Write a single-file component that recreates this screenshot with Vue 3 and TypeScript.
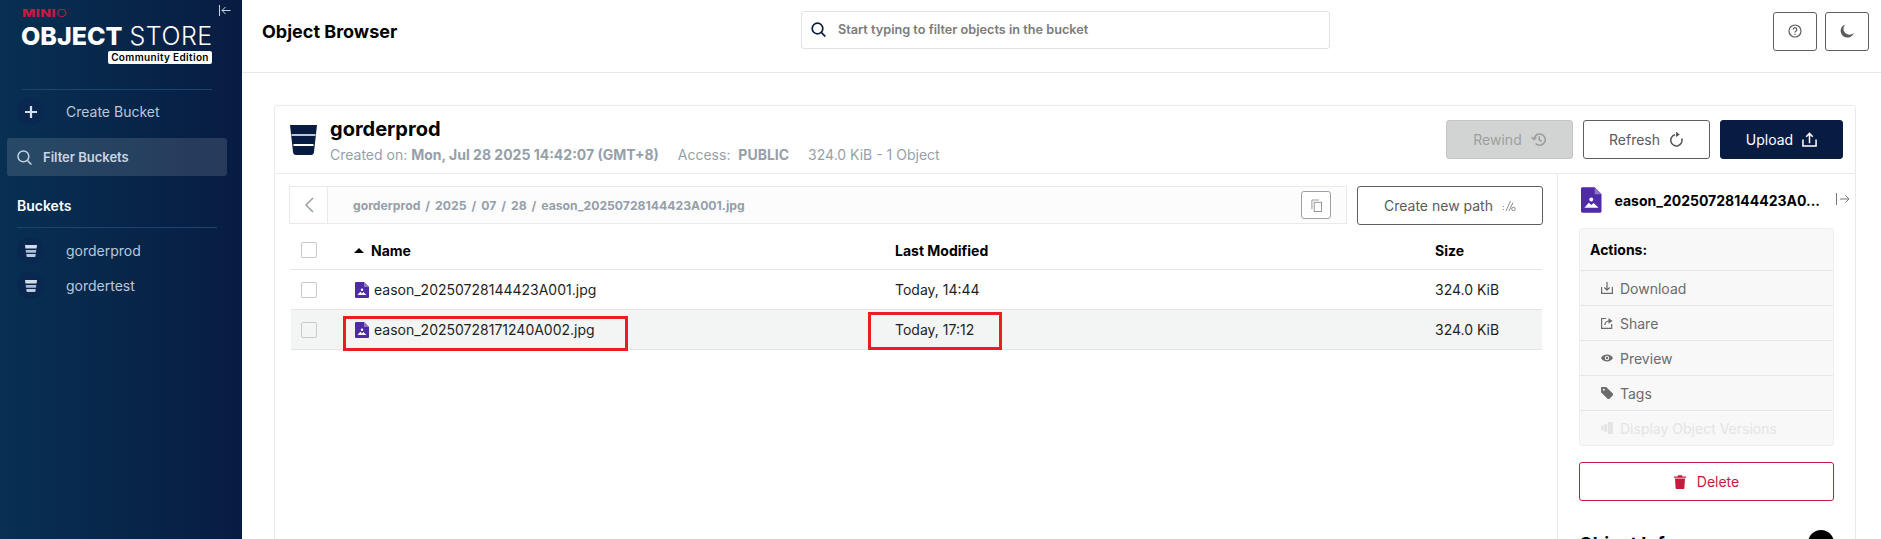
<template>
  <div class="page">
    <aside class="sidebar">
      <div class="brand">
        <div class="brand-top">
          <div class="minio"><b>MINI</b><span>O</span></div>
          <svg class="collapse" viewBox="0 0 12 12" width="12" height="12" fill="none" stroke="#c9d3df" stroke-width="1">
            <path d="M.5 0v11M11.5 5.5H3M6.5 2 3 5.5 6.5 9" />
          </svg>
        </div>
        <div class="wordmark"><b>OBJECT</b> <span>STORE</span></div>
        <div class="edition">Community Edition</div>
      </div>
      <div class="side-line"></div>
      <div class="side-item create">
        <span class="disc">
          <svg viewBox="0 0 12 12" width="12" height="12"><path d="M6 0v12M0 6h12" stroke="#d6dfe9" stroke-width="2.2" /></svg>
        </span>
        <span>Create Bucket</span>
      </div>
      <div class="side-filter">
        <svg viewBox="0 0 15 15" width="15" height="15" fill="none" stroke="#c5d2e0" stroke-width="1.5">
          <circle cx="6.4" cy="6.4" r="5.4" /><path d="m10.4 10.4 4 4.2" />
        </svg>
        <span>Filter Buckets</span>
      </div>
      <div class="side-title">Buckets</div>
      <div v-for="b in buckets" :key="b" class="side-item bucket">
        <span class="disc">
          <svg viewBox="0 0 12 12" width="12" height="12" fill="#a9bdd6">
            <path d="M0 0h12l-.4 3.600H.4z" fill="#d3dde9" />
            <path d="M.7 4.900h10.600l-.4 2.900H1.100z" />
            <path d="M1.300 9h9.400l-.2 2a1 1 0 0 1-1 1h-7a1 1 0 0 1-1-1z" fill="#bccbdf" />
          </svg>
        </span>
        <span>{{ b }}</span>
      </div>
    </aside>

    <main class="main">
      <header class="topbar">
        <h1>Object Browser</h1>
        <div class="search">
          <svg viewBox="0 0 15 15" width="15" height="15" fill="none" stroke="#081c42" stroke-width="1.7">
            <circle cx="6.500" cy="6.500" r="5.300" /><path d="m10.300 10.300 4 4.200" />
          </svg>
          <span>Start typing to filter objects in the bucket</span>
        </div>
        <div class="top-actions">
          <button class="square">
            <svg viewBox="0 0 14 14" width="14" height="14" fill="none" stroke="#5b5b5b" stroke-width="1.200">
              <circle cx="7" cy="7" r="6" />
              <path d="M5.200 5.500a1.800 1.800 0 1 1 2.800 1.500c-.7.400-1 .8-1 1.500" />
              <path d="M7 9.700v1.200" />
            </svg>
          </button>
          <button class="square">
            <svg viewBox="0 0 14 14" width="14" height="14" fill="#5b5b5b">
              <path d="M5.200.4A6.800 6.800 0 1 0 13.900 9 5.800 5.800 0 0 1 5.200.4z" />
            </svg>
          </button>
        </div>
      </header>

      <div class="content">
        <section class="bucket-head">
          <svg class="bucket-icon" viewBox="0 0 29 30" width="29" height="30">
            <path d="M1 0h27l-3 27q-.3 3-3 3H7q-2.700 0-3-3z" fill="#081c42" />
            <path d="M2.500 10h24" stroke="#fff" stroke-width="1.500" />
            <path d="M4.500 20h20" stroke="#fff" stroke-width="2" />
          </svg>
          <div class="bucket-meta">
            <h2>gorderprod</h2>
            <div class="bucket-sub">
              <span>Created on: <b>Mon, Jul 28 2025 14:42:07 (GMT+8)</b></span>
              <span>Access: &nbsp;<b>PUBLIC</b></span>
              <span>324.0 KiB - 1 Object</span>
            </div>
          </div>
          <div class="head-actions">
            <button class="btn disabled">
              Rewind
              <svg viewBox="0 0 16 16" width="15" height="15" fill="none" stroke="#9e9e9e" stroke-width="1.700">
                <path d="M3.200 7.800a6 6 0 1 1 1.700 4.500" />
                <path d="M.8 5.600 3.200 8l2.400-2.400" />
                <path d="M8.800 4.500v4l2.500 1.500" />
              </svg>
            </button>
            <button class="btn">
              Refresh
              <svg viewBox="0 0 16 16" width="15" height="15" fill="none" stroke="#555" stroke-width="1.600">
                <path d="M6.500 3A6 6 0 1 0 13.600 7" />
                <path d="M6.500 0v5.800L10.500 3z" fill="#555" stroke="none" transform="translate(1 -.4)" />
              </svg>
            </button>
            <button class="btn primary">
              Upload
              <svg viewBox="0 0 16 16" width="15" height="15" fill="none" stroke="#fff" stroke-width="1.600">
                <path d="M1 8v7h14V8" />
                <path d="M8 12V1.500M4.500 5 8 1.500 11.500 5" />
              </svg>
            </button>
          </div>
        </section>

        <section class="lower">
          <div class="browser">
            <div class="path-row">
              <div class="crumbs">
                <div class="back">
                  <svg viewBox="0 0 10 16" width="10" height="16" fill="none" stroke="#8f9aa5" stroke-width="1.400">
                    <path d="M9 1 2 8l7 7" />
                  </svg>
                </div>
                <div class="crumb-text">
                  <span v-for="(c, i) in crumbs" :key="i">{{ c }}</span>
                </div>
                <button class="copy">
                  <svg viewBox="0 0 12 14" width="11" height="13" fill="none" stroke="#8a8f94" stroke-width="1">
                    <rect x="3.500" y="3.500" width="8" height="10" />
                    <path d="M1 11V1h7.500" />
                  </svg>
                </button>
              </div>
              <button class="btn new-path">
                Create new path
                <svg viewBox="0 0 14 12" width="14" height="12" fill="none" stroke="#8d8d8d" stroke-width="1">
                  <path d="M4 11 8.500 1M7 11 11 2.500" />
                  <path d="M1 6.500h1M1 9.500h1" stroke-width="1.200" />
                  <circle cx="11.500" cy="9" r="1.800" />
                </svg>
              </button>
            </div>

            <div class="table">
              <div class="row head">
                <span class="check"></span>
                <span class="name-head"><i class="sort"></i>Name</span>
                <span>Last Modified</span>
                <span>Size</span>
              </div>
              <div v-for="f in files" :key="f.name" class="row" :class="{ active: f.active }">
                <span class="check"></span>
                <span class="file">
                  <svg viewBox="0 0 14 16" width="14" height="16">
                    <path d="M1 0h8l5 5v10a1 1 0 0 1-1 1H1a1 1 0 0 1-1-1V1a1 1 0 0 1 1-1z" fill="#4f2ba7" />
                    <path d="M9 0l5 5H9z" fill="#8e78c6" />
                    <circle cx="7" cy="7.800" r="1.200" fill="#fff" />
                    <path d="M2.500 13 5.300 9.800 7 11.300l1.400-1.300 3 3z" fill="#fff" />
                  </svg>
                  {{ f.name }}
                </span>
                <span>{{ f.modified }}</span>
                <span>{{ f.size }}</span>
              </div>
            </div>
          </div>

          <aside class="detail">
            <div class="detail-title">
              <svg viewBox="0 0 21 26" width="21" height="26">
                <path d="M1.500 0H14l7 7v17.500a1.500 1.500 0 0 1-1.500 1.500h-18A1.500 1.500 0 0 1 0 24.500v-23A1.500 1.500 0 0 1 1.500 0z" fill="#4f2ba7" />
                <path d="M14 0l7 7h-7z" fill="#8e78c6" />
                <circle cx="10.500" cy="12.500" r="2" fill="#fff" />
                <path d="M3.500 21 8 15.800l2.600 2.400 2.300-2.200L18 21z" fill="#fff" />
              </svg>
              <b>eason_20250728144423A0...</b>
              <svg class="close-detail" viewBox="0 0 14 12" width="14" height="12" fill="none" stroke="#777" stroke-width="1">
                <path d="M.5 0v12M4 6h9M9.500 2.500 13 6 9.500 9.500" />
              </svg>
            </div>

            <div class="actions">
              <div class="actions-title">Actions:</div>
              <div class="action">
                <svg viewBox="0 0 12 12" width="12" height="12" fill="none" stroke="#6b6b6b" stroke-width="1.200">
                  <path d="M.6 5v6.400h10.800V5M6 0v8M3.300 5.500 6 8.200l2.700-2.700" />
                </svg>
                Download
              </div>
              <div class="action">
                <svg viewBox="0 0 12 12" width="12" height="12" fill="none" stroke="#6b6b6b" stroke-width="1.200">
                  <path d="M5 1.500H.6v9.900h10.100V7" />
                  <path d="M3.800 8c.3-2.600 2-4 4.700-4" />
                  <path d="M7.500 1 11.500 4 7.500 6.800z" fill="#6b6b6b" stroke="none" />
                </svg>
                Share
              </div>
              <div class="action">
                <svg viewBox="0 0 12 12" width="12" height="12">
                  <path d="M6 2.500C3.400 2.500 1.200 4 0 6c1.200 2 3.400 3.500 6 3.500S10.800 8 12 6c-1.200-2-3.400-3.500-6-3.500z" fill="#6b6b6b" />
                  <circle cx="6" cy="6" r="2.200" fill="#f8f8f8" />
                  <circle cx="6" cy="6" r="1.200" fill="#6b6b6b" />
                </svg>
                Preview
              </div>
              <div class="action">
                <svg viewBox="0 0 12 12" width="12" height="12">
                  <path d="M0 1a1 1 0 0 1 1-1h4.200L12 6.800a1 1 0 0 1 0 1.400L8.200 12a1 1 0 0 1-1.400 0L0 5.200z" fill="#6b6b6b" />
                  <circle cx="2.800" cy="2.800" r="1" fill="#f8f8f8" />
                </svg>
                Tags
              </div>
              <div class="action off">
                <svg viewBox="0 0 12 12" width="12" height="12" fill="#e4e4e4">
                  <rect x="0" y="3.500" width="2.500" height="5" />
                  <rect x="3.200" y="2" width="2.800" height="8" />
                  <rect x="6.800" y="0" width="5.200" height="12" />
                </svg>
                Display Object Versions
              </div>
            </div>

            <button class="delete">
              <svg viewBox="0 0 12 14" width="12" height="14" fill="#c51b3f">
                <path d="M1 3.500h10l-.6 9.500a1 1 0 0 1-1 1H2.600a1 1 0 0 1-1-1z" />
                <path d="M0 1.500h3.800V.3h4.400v1.200H12v1.200H0z" />
              </svg>
              Delete
            </button>

            <div class="info-head">
              <span>Object Info</span>
              <span class="info-toggle">
                <svg viewBox="0 0 12 8" width="12" height="8"><path d="M6 0l6 8H0z" fill="#fff" /></svg>
              </span>
            </div>
          </aside>
        </section>
      </div>
    </main>

    <div class="mark mark-name"></div>
    <div class="mark mark-date"></div>
  </div>
</template>

<script setup lang="ts">
interface FileRow {
  name: string
  modified: string
  size: string
  active?: boolean
}

const buckets: string[] = ['gorderprod', 'gordertest']
const crumbs: string[] = ['gorderprod', '2025', '07', '28', 'eason_20250728144423A001.jpg']
const files: FileRow[] = [
  { name: 'eason_20250728144423A001.jpg', modified: 'Today, 14:44', size: '324.0 KiB' },
  { name: 'eason_20250728171240A002.jpg', modified: 'Today, 17:12', size: '324.0 KiB', active: true },
]
</script>

<style>
html, body {
  margin: 0;
  background: #fff;
  overflow: hidden;
}
</style>

<style scoped>
.page {
  position: relative;
  display: flex;
  height: 539px;
  overflow: hidden;
  font-family: Inter, "Liberation Sans", sans-serif;
  font-size: 14px;
  color: #000;
}

button {
  font-family: inherit;
}

.sidebar {
  flex: 0 0 242px;
  box-sizing: border-box;
  padding: 0 0 0 7px;
  background: linear-gradient(90deg, #073052 0%, #081c42 100%);
  color: #b9c8da;
}

.brand {
  width: 190px;
  margin-left: 15px;
  height: 89px;
  box-sizing: border-box;
  padding-top: 8px;
}

.brand-top {
  display: flex;
  justify-content: space-between;
  align-items: flex-start;
  height: 13px;
}

.minio {
  font-size: 10px;
  line-height: 11px;
  letter-spacing: .3px;
  color: #c51b3f;
  transform: scaleX(1.42);
  transform-origin: left center;
}

.minio b {
  font-weight: 800;
}

.minio span {
  font-weight: 300;
}

.collapse {
  margin: -3px -19px 0 0;
  flex-shrink: 0;
}

.wordmark {
  margin: 2px 0 0 -1px;
  white-space: nowrap;
  font-size: 25px;
  line-height: 26px;
  color: #fff;
}

.wordmark b {
  font-weight: 800;
}

.wordmark span {
  font-weight: 300;
  letter-spacing: .5px;
}

.edition {
  width: 104px;
  height: 13px;
  margin: 2px 0 0 86px;
  background: #fff;
  border-radius: 2px;
  color: #000;
  font-size: 10px;
  font-weight: 600;
  line-height: 13px;
  letter-spacing: .35px;
  text-align: center;
  white-space: nowrap;
}

.side-line {
  width: 190px;
  height: 1px;
  margin-left: 15px;
  background: #1b4568;
}

.side-item {
  display: flex;
  align-items: center;
  gap: 22px;
  margin-left: 10px;
}

.create {
  margin-top: 8px;
  height: 27px;
}

.bucket {
  height: 27px;
  margin-bottom: 8px;
}

.disc {
  display: flex;
  align-items: center;
  justify-content: center;
  width: 27px;
  height: 27px;
  flex-shrink: 0;
  border-radius: 50%;
  background: #0a2750;
}

.side-filter {
  display: flex;
  align-items: center;
  gap: 11px;
  box-sizing: border-box;
  width: 220px;
  height: 38px;
  margin-top: 13px;
  padding-left: 10px;
  border-radius: 3px;
  background: rgba(255, 255, 255, .13);
  color: #c9d5e3;
  font-size: 13px;
  font-weight: 600;
}

.side-title {
  width: 200px;
  height: 52px;
  box-sizing: border-box;
  margin: 0 0 9px 10px;
  padding-top: 21px;
  border-bottom: 1px solid #1b4568;
  color: #fff;
  font-weight: 600;
  line-height: 18px;
}

.main {
  flex: 1;
  min-width: 0;
}

.topbar {
  display: flex;
  align-items: center;
  box-sizing: border-box;
  height: 73px;
  padding: 0 12px 10px 20px;
  border-bottom: 1px solid #e8e8e8;
}

h1 {
  flex: 0 0 539px;
  margin: 0;
  font-size: 18px;
  font-weight: 700;
}

.search {
  display: flex;
  align-items: center;
  gap: 12px;
  box-sizing: border-box;
  width: 529px;
  height: 38px;
  margin-bottom: 2px;
  padding: 0 0 1px 9px;
  border: 1px solid #e2e2e2;
  border-radius: 3px;
  color: #7b7b7b;
  font-size: 12.7px;
  font-weight: 600;
}

.top-actions {
  display: flex;
  gap: 8px;
  margin-left: auto;
}

.square {
  display: flex;
  align-items: center;
  justify-content: center;
  width: 44px;
  height: 39px;
  padding: 0;
  background: #fff;
  border: 1px solid #5e5e5e;
  border-radius: 3px;
}

.content {
  padding: 32px 25px 0 32px;
}

.bucket-head {
  display: flex;
  align-items: center;
  box-sizing: border-box;
  height: 69px;
  padding: 0 12px 0 14px;
  border: 1px solid #eaeaea;
  border-radius: 3px 3px 0 0;
}

.bucket-icon {
  flex-shrink: 0;
  margin-right: 12px;
}

h2 {
  margin: 0;
  font-size: 20px;
  font-weight: 700;
  line-height: 24px;
}

.bucket-sub {
  display: flex;
  gap: 19px;
  margin-top: 5px;
  color: #969fa9;
  font-size: 14px;
  line-height: 17px;
  white-space: nowrap;
}

.head-actions {
  display: flex;
  gap: 10px;
  margin-left: auto;
}

.btn {
  display: flex;
  align-items: center;
  justify-content: center;
  gap: 9px;
  width: 127px;
  height: 39px;
  padding: 0;
  background: #fff;
  border: 1px solid #5e5e5e;
  border-radius: 3px;
  color: #5b5b5b;
  font-size: 14px;
}

.btn.disabled {
  background: #d2d4d4;
  border-color: #c4c6c6;
  color: #9e9e9e;
}

.btn.primary {
  width: 123px;
  background: #081c42;
  border-color: #081c42;
  color: #fff;
}

.lower {
  display: flex;
  height: 366px;
  border: 1px solid #eaeaea;
  border-top: 0;
  box-sizing: border-box;
}

.browser {
  flex: 0 0 1283px;
  box-sizing: border-box;
  padding: 12px 14px 0 14px;
  border-right: 1px solid #eaeaea;
}

.path-row {
  display: flex;
  gap: 10px;
}

.crumbs {
  display: flex;
  align-items: center;
  box-sizing: border-box;
  width: 1058px;
  height: 38px;
  background: #fcfcfd;
  border: 1px solid #eaeaea;
}

.back {
  display: flex;
  align-items: center;
  justify-content: center;
  width: 37px;
  height: 100%;
  background: #fff;
  border-right: 1px solid #eaeaea;
}

.crumb-text {
  display: flex;
  flex: 1;
  margin-left: 25px;
  color: #969fa9;
  font-size: 12.2px;
  font-weight: 700;
}

.crumb-text span + span::before {
  content: "/";
  margin: 0 5px;
}

.copy {
  display: flex;
  align-items: center;
  justify-content: center;
  width: 30px;
  height: 28px;
  margin-right: 15px;
  padding: 0;
  background: #fff;
  border: 1px solid #9aa0a6;
  border-radius: 3px;
}

.new-path {
  width: 186px;
  flex-shrink: 0;
}

.table {
  margin-left: 2px;
  width: 1251px;
}

.row {
  display: grid;
  grid-template-columns: 63px 541px 540px 1fr;
  align-items: center;
  height: 40px;
  border-bottom: 1px solid #e4e4e4;
  box-sizing: border-box;
  color: #1f1f1f;
}

.row.head {
  height: 45px;
  padding-top: 6px;
  color: #000;
  font-weight: 700;
}

.row.active {
  background: #f3f4f4;
}

.check {
  width: 16px;
  height: 16px;
  margin-left: 10px;
  box-sizing: border-box;
  background: #fff;
  border: 1px solid #c9c9c9;
  border-radius: 2px;
}

.active .check {
  background: #f3f4f4;
}

.name-head {
  display: flex;
  align-items: center;
}

.sort {
  width: 0;
  height: 0;
  margin-right: 7px;
  border-left: 5.500px solid transparent;
  border-right: 5.500px solid transparent;
  border-bottom: 5px solid #000;
}

.file {
  display: flex;
  align-items: center;
  gap: 5px;
  padding-left: 1px;
}

.detail {
  flex: 1;
  padding: 12px 21px 0 21px;
  min-width: 0;
}

.detail-title {
  display: flex;
  align-items: center;
  gap: 13px;
  height: 26px;
  padding: 1px 0 0 2px;
  white-space: nowrap;
}

.close-detail {
  margin: -2px -16px 0 3px;
  flex-shrink: 0;
}

.actions {
  margin-top: 15px;
  background: #f8f8f8;
  border: 1px solid #eeeeee;
  border-radius: 3px;
}

.actions-title {
  height: 41px;
  padding-left: 10px;
  font-weight: 700;
  line-height: 41px;
}

.action {
  display: flex;
  align-items: center;
  gap: 7px;
  height: 34px;
  padding-left: 21px;
  border-top: 1px solid #e6e6e6;
  color: #6b6b6b;
}

.action.off {
  color: #e4e4e4;
}

.delete {
  display: flex;
  align-items: center;
  justify-content: center;
  gap: 11px;
  width: 100%;
  height: 39px;
  margin-top: 16px;
  padding: 0;
  background: #fff;
  border: 1px solid #c51b3f;
  border-radius: 3px;
  color: #c51b3f;
  font-size: 14px;
}

.info-head {
  display: flex;
  align-items: center;
  justify-content: space-between;
  margin-top: 29px;
  font-size: 18px;
  font-weight: 700;
}

.info-toggle {
  display: flex;
  align-items: center;
  justify-content: center;
  width: 26px;
  height: 26px;
  border-radius: 50%;
  background: #000;
}

.mark {
  position: absolute;
  box-sizing: border-box;
  border: 3px solid #ed1c24;
}

.mark-name {
  left: 343px;
  top: 316px;
  width: 285px;
  height: 35px;
}

.mark-date {
  left: 868px;
  top: 312px;
  width: 134px;
  height: 38px;
}
</style>
